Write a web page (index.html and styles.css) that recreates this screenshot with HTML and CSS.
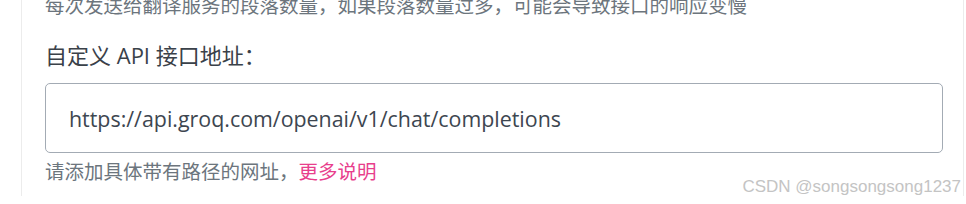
FILE: index.html
```html
<!DOCTYPE html>
<html lang="zh-CN">
<head>
  <meta charset="UTF-8">
  <title>设置</title>
  <link rel="stylesheet" href="styles.css">
</head>
<body>

<div class="panel">
  <div class="hint top-hint">每次发送给翻译服务的段落数量，如果段落数量过多，可能会导致接口的响应变慢</div>

  <div class="field">
    <label class="label" for="apiUrl">自定义 API 接口地址：</label>
    <input type="text" id="apiUrl" class="url-input" value="https://api.groq.com/openai/v1/chat/completions">
    <div class="hint">请添加具体带有路径的网址，<a href="#" class="more">更多说明</a></div>
  </div>
</div>

<div class="watermark">CSDN @songsongsong1237</div>

</body>
</html>
```

FILE: styles.css
```css
body {
  margin: 0;
  background: #fff;
  font-family: 'Open Sans', 'Noto Sans CJK SC', sans-serif;
  height: 204px;
  overflow: hidden;
  position: relative;
}

.panel {
  margin-left: 21px;
  width: 943px;
  height: 204px;
  border-left: 1px solid #ececec;
  border-right: 1px solid #ececec;
  padding: 0 22px 0 23px;
  box-sizing: border-box;
}

.hint {
  font-size: 19.5px;
  line-height: 28px;
  color: #6c757d;
}

.top-hint {
  margin-top: -8px;
}

.field {
  margin-top: 20px;
}

.label {
  display: block;
  font-size: 22px;
  line-height: 30px;
  color: #3a4149;
  margin-bottom: 13px;
}

.url-input {
  display: block;
  width: 898px;
  height: 70px;
  box-sizing: border-box;
  padding: 0 23px;
  font-family: 'Open Sans', sans-serif;
  font-size: 21.4px;
  color: #3d4650;
  border: 1px solid #a3abb4;
  border-radius: 5px;
  outline: none;
  margin-bottom: 5px;
}

.more {
  color: #e83e8c;
  text-decoration: none;
}

.watermark {
  position: absolute;
  right: 5px;
  bottom: 7px;
  font-family: 'Liberation Sans', Arial, sans-serif;
  font-size: 17px;
  color: #c4c4c4;
}
```
